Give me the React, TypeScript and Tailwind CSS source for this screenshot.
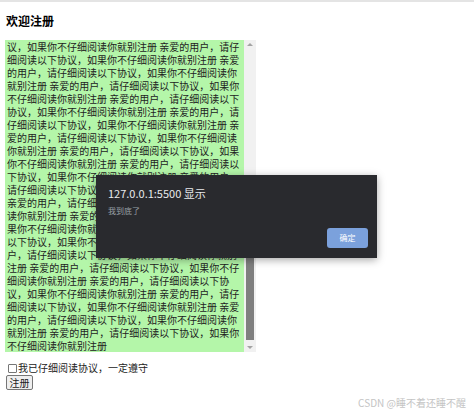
const lines = [
  '议，如果你不仔细阅读你就别注册 亲爱的用户，请仔',
  '细阅读以下协议，如果你不仔细阅读你就别注册 亲爱',
  '的用户，请仔细阅读以下协议，如果你不仔细阅读你',
  '就别注册 亲爱的用户，请仔细阅读以下协议，如果你',
  '不仔细阅读你就别注册 亲爱的用户，请仔细阅读以下',
  '协议，如果你不仔细阅读你就别注册 亲爱的用户，请',
  '仔细阅读以下协议，如果你不仔细阅读你就别注册 亲',
  '爱的用户，请仔细阅读以下协议，如果你不仔细阅读',
  '你就别注册 亲爱的用户，请仔细阅读以下协议，如果',
  '你不仔细阅读你就别注册 亲爱的用户，请仔细阅读以',
  '下协议，如果你不仔细阅读你就别注册 亲爱的用户，',
  '请仔细阅读以下协议，如果你不仔细阅读你就别注册',
  '亲爱的用户，请仔细阅读以下协议，如果你不仔细阅',
  '读你就别注册 亲爱的用户，请仔细阅读以下协议，如',
  '果你不仔细阅读你就别注册 亲爱的用户，请仔细阅读',
  '以下协议，如果你不仔细阅读你就别注册 亲爱的用',
  '户，请仔细阅读以下协议，如果你不仔细阅读你就别',
  '注册 亲爱的用户，请仔细阅读以下协议，如果你不仔',
  '细阅读你就别注册 亲爱的用户，请仔细阅读以下协',
  '议，如果你不仔细阅读你就别注册 亲爱的用户，请仔',
  '细阅读以下协议，如果你不仔细阅读你就别注册 亲爱',
  '的用户，请仔细阅读以下协议，如果你不仔细阅读你',
  '就别注册 亲爱的用户，请仔细阅读以下协议，如果你',
  '不仔细阅读你就别注册',
];

const font = { fontFamily: '"Noto Sans CJK SC", "Noto Sans", sans-serif' };

const Scrollbar = () => (
  <div className="relative w-[12px] bg-[#f1f1f1]">
    <div className="absolute left-1/2 top-[3px] -translate-x-1/2 w-0 h-0 border-l-[3px] border-r-[3px] border-b-[3px] border-l-transparent border-r-transparent border-b-[#a3a3a3]" />
    <div className="absolute left-[2px] right-[2px] top-[138px] bottom-[12px] bg-[#7f7f7f]" />
    <div className="absolute left-1/2 bottom-[3px] -translate-x-1/2 w-0 h-0 border-l-[3px] border-r-[3px] border-t-[3px] border-l-transparent border-r-transparent border-t-[#a3a3a3]" />
  </div>
);

const AlertDialog = () => (
  <div className="absolute left-[96px] top-[175px] w-[281px] h-[83px] bg-[#292a2e] shadow-[0_2px_8px_rgba(0,0,0,0.35)] flex flex-col pt-[11px] pb-[10px]">
    <div className="px-[12px] text-[11px] leading-[14px] text-[#e8eaed]">127.0.0.1:5500 显示</div>
    <div className="px-[12px] mt-[5px] text-[8px] leading-[12px] text-[#9aa0a6]">我到底了</div>
    <div className="flex justify-end pr-[9px] mt-[11px]">
      <button className="w-[41px] h-[20px] rounded-[3px] bg-[#7ba1dc] text-white text-[8px] flex items-center justify-center">
        确定
      </button>
    </div>
  </div>
);

export default function App() {
  return (
    <div className="relative w-[474px] h-[412px] bg-white overflow-hidden text-[#1a1a1a]" style={font}>
      <div className="h-[2px] bg-[#e4e4e4]" />
      <div className="pl-[5px]">
        <h3 className="mt-[10px] pl-[1px] text-[12px] leading-[18px] font-bold text-black">欢迎注册</h3>
        <div className="mt-[10px] flex w-[251px] h-[312px]">
          <div className="flex-1 bg-[#b4f6a9] pl-[2px] overflow-hidden text-[10px] leading-[13px] text-[#222]">
            {lines.map((line, i) => (
              <div key={i} className="whitespace-pre overflow-hidden">{line}</div>
            ))}
          </div>
          <Scrollbar />
        </div>
        <label className="mt-[9px] h-[14px] flex items-center text-[10px] leading-[14px] text-[#222]">
          <span className="ml-[3px] mr-[1px] w-[9px] h-[9px] border border-[#767676] rounded-[1px] bg-white" />
          我已仔细阅读协议，一定遵守
        </label>
        <button className="ml-[1px] w-[27px] h-[15px] border border-[#767676] rounded-[2px] bg-[#efefef] text-[10px] leading-[13px] text-[#222] flex items-center justify-center">
          注册
        </button>
      </div>
      <div className="absolute right-[8px] bottom-[2px] text-[10px] leading-[14px] text-[#c4c4c4]">CSDN @睡不着还睡不醒</div>
      <AlertDialog />
    </div>
  );
}
